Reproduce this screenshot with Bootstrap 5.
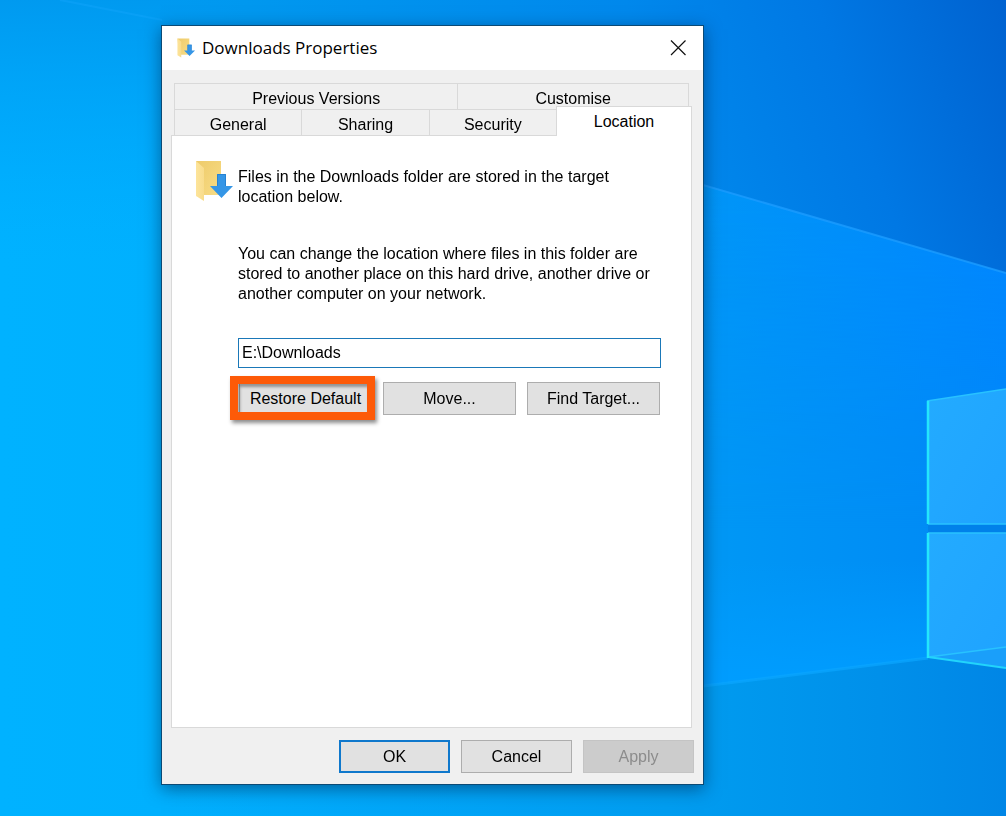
<!DOCTYPE html>
<html lang="en">
<head>
<meta charset="utf-8">
<meta name="viewport" content="width=device-width, initial-scale=1">
<title>Downloads Properties</title>
<link href="https://cdn.jsdelivr.net/npm/bootstrap@5.3.0/dist/css/bootstrap.min.css" rel="stylesheet">
<style>
  body { font-family: "Liberation Sans", Arial, sans-serif; font-size: 16px; line-height: 20px; color: #000; background: #00a4fb; }
  .desktop { padding: 25px 16px 31px 161px; }
  .wallpaper { position: fixed; inset: 0; z-index: -1; }
  .dialog-window { max-width: 543px; background: #f0f0f0; border: 1px solid #0b4a75; box-shadow: 0 4px 16px rgba(0, 25, 60, .5); }
  .title-bar { height: 44px; padding: 0 16px 0 14px; gap: 6px; }
  .title-bar h1 { font-family: "Open Sans", "Noto Sans", sans-serif; font-size: 17px; line-height: 24px; font-weight: 400; }
  .close-btn { width: 18px; height: 18px; }
  .sheet { padding: 13px 11px 0 9px; }
  .tab-rows { margin: 0 3px; }
  .tab-btn { height: 27px; padding: 4px 0 0; border: 1px solid #d9d9d9; border-right-width: 0; border-bottom-width: 0; background: #f0f0f0; color: #000; line-height: 20px; }
  .tab-rows .row-end { border-right-width: 1px; }
  .tab-wide { flex: 284 1 0; }
  .tab-narrow { flex: 231 1 0; }
  .tab-third { flex: 1 1 0; }
  .tab-row-front { margin: -1px -3px 0 0; }
  .tab-row-front .tab-btn { height: 26px; }
  .tab-row-front .tab-btn.current { flex: 0 0 136px; height: 30px; margin: -3px 0 -1px; padding: 0; border-right-width: 1px; background: #fff; position: relative; }
  .panel { border: 1px solid #d9d9d9; background: #fff; padding: 24px 30px 24px 23px; gap: 5px; }
  .panel-copy { padding-top: 7px; }
  .intro { margin-bottom: 37px; }
  .explain { margin-bottom: 34px; }
  .path-box { height: 30px; padding: 0 3px; border: 1px solid #1a78b8; border-radius: 0; font-size: 16px; line-height: 28px; color: #000; }
  .action-row { gap: 11px; margin: 14px 1px 0; }
  .win-btn { --bs-btn-color: #000; --bs-btn-bg: #e1e1e1; --bs-btn-border-color: #adadad; --bs-btn-hover-color: #000; --bs-btn-hover-bg: #e5f1fb; --bs-btn-hover-border-color: #0078d7; --bs-btn-disabled-color: #8c8c8c; --bs-btn-disabled-bg: #ccc; --bs-btn-disabled-border-color: #c4c4c4; --bs-btn-disabled-opacity: 1; --bs-btn-border-radius: 0; --bs-btn-padding-x: 0; --bs-btn-padding-y: 0; --bs-btn-font-size: 16px; --bs-btn-line-height: 20px; height: 33px; }
  .default-btn { --bs-btn-border-color: #0f78cc; --bs-btn-border-width: 2px; }
  .callout-frame { position: absolute; inset: -7px -4px -6px -10px; border: 8px solid #fd5a08; box-shadow: 2px 3px 4px rgba(0, 0, 0, .45), inset 2px 3px 3px rgba(0, 0, 0, .35); pointer-events: none; }
  .command-row { gap: 11px; padding: 12px 9px 11px; }
  .command-row .win-btn { width: 111px; }
</style>
</head>
<body>
<svg class="wallpaper w-100 h-100" viewBox="0 0 1006 816" preserveAspectRatio="xMaxYMid slice" aria-hidden="true">
  <defs>
    <linearGradient id="base" x1="0" y1="0" x2="1" y2="0">
      <stop offset="0" stop-color="#00b2ff"/><stop offset=".16" stop-color="#00b0fe"/><stop offset=".7" stop-color="#0098f5"/><stop offset="1" stop-color="#0088f5"/>
    </linearGradient>
    <linearGradient id="sky" gradientUnits="userSpaceOnUse" x1="160" y1="300" x2="1006" y2="0">
      <stop offset="0" stop-color="#009cf4" stop-opacity="0"/><stop offset=".2" stop-color="#0098ef"/><stop offset=".6" stop-color="#0088ec"/><stop offset=".8" stop-color="#0078e4"/><stop offset="1" stop-color="#0062d0"/>
    </linearGradient>
    <linearGradient id="top" x1="0" y1="0" x2="0" y2="1">
      <stop offset="0" stop-color="#0094ec" stop-opacity=".8"/><stop offset=".5" stop-color="#009cf5" stop-opacity=".4"/><stop offset="1" stop-color="#00a8ff" stop-opacity="0"/>
    </linearGradient>
    <linearGradient id="beam" x1="0" y1="0" x2="1" y2="0">
      <stop offset="0" stop-color="#0096f7"/><stop offset="1" stop-color="#0086ff"/>
    </linearGradient>
    <linearGradient id="beamfade" x1="0" y1="0" x2="0" y2="1">
      <stop offset="0" stop-color="#fff"/><stop offset=".5" stop-color="#fff" stop-opacity=".7"/><stop offset="1" stop-color="#fff" stop-opacity="0"/>
    </linearGradient>
    <mask id="fade"><rect x="690" y="170" width="316" height="360" fill="url(#beamfade)"/></mask>
    <linearGradient id="floor" gradientUnits="userSpaceOnUse" x1="160" y1="0" x2="1006" y2="0">
      <stop offset="0" stop-color="#00aefb" stop-opacity="0"/><stop offset=".6" stop-color="#009df0"/><stop offset=".85" stop-color="#0090ea"/><stop offset="1" stop-color="#0086e6"/>
    </linearGradient>
    <linearGradient id="glow" x1="0" y1="0" x2="0" y2="1">
      <stop offset="0" stop-color="#009dff" stop-opacity="0"/><stop offset="1" stop-color="#009dff"/>
    </linearGradient>
    <linearGradient id="pane" x1="0" y1="0" x2="1" y2="1">
      <stop offset="0" stop-color="#23abff"/><stop offset="1" stop-color="#1fa3ff"/>
    </linearGradient>
  </defs>
  <rect width="1006" height="816" fill="url(#base)"/>
  <rect width="720" height="260" fill="url(#top)"/>
  <path d="M160 0H1006V273L703 185L160 60Z" fill="url(#sky)"/>
  <path d="M690 182L1006 273V530H690Z" fill="url(#beam)" mask="url(#fade)"/>
  <path d="M690 560H928V658L690 688Z" fill="url(#glow)"/>
  <path d="M160 760L703 686L928 658L1006 668V816H160Z" fill="url(#floor)"/>
  <path d="M60 0L162 20" stroke="#18a8ff" stroke-width="2" opacity=".35"/>
  <path d="M703 185L1006 273" stroke="#1c9cff" stroke-width="2" opacity=".8"/>
  <path d="M703 686L928 658" stroke="#0ba6ff" stroke-width="3" opacity=".7"/>
  <path d="M928 524H1006V533H928Z" fill="#0081ea"/>
  <path d="M928 401L1006 389V524H928Z" fill="url(#pane)"/>
  <path d="M928 533H1006V668L928 657Z" fill="url(#pane)"/>
  <path d="M928 657L1006 647V668Z" fill="#1a9ffa"/>
  <path d="M927 401L1006 389M928 524H1006M928 533H1006M928 657L1006 647" fill="none" stroke="#28c2ff" stroke-width="1.5"/>
  <path d="M928 657L1006 668" stroke="#22d4fb" stroke-width="2"/>
  <path d="M928 401V524M928 533V658" stroke="#24e6fc" stroke-width="2.5"/>
</svg>

<main class="desktop min-vh-100 d-flex">
  <section class="dialog-window w-100 d-flex flex-column" aria-labelledby="dialogTitle">
    <header class="title-bar bg-white d-flex align-items-center">
      <svg width="20" height="20" viewBox="0 0 38 42" aria-hidden="true"><use href="#folder"/></svg>
      <h1 id="dialogTitle" class="mb-0 flex-grow-1">Downloads Properties</h1>
      <button type="button" class="close-btn border-0 bg-transparent p-0 d-flex" aria-label="Close">
        <svg width="18" height="18" viewBox="0 0 18 18"><path d="M2 1.500L16.500 16M16.500 1.500L2 16" stroke="#111" stroke-width="1.200"/></svg>
      </button>
    </header>

    <div class="sheet flex-grow-1 d-flex flex-column">
      <div class="tab-rows" role="tablist">
        <div class="d-flex">
          <button type="button" role="tab" class="tab-btn tab-wide">Previous Versions</button>
          <button type="button" role="tab" class="tab-btn tab-narrow row-end">Customise</button>
        </div>
        <div class="tab-row-front d-flex">
          <button type="button" role="tab" class="tab-btn tab-third">General</button>
          <button type="button" role="tab" class="tab-btn tab-third">Sharing</button>
          <button type="button" role="tab" class="tab-btn tab-third">Security</button>
          <button type="button" role="tab" class="tab-btn current" aria-selected="true" aria-controls="locationPanel">Location</button>
        </div>
      </div>

      <div id="locationPanel" role="tabpanel" class="panel flex-grow-1 d-flex align-items-start">
        <svg class="flex-shrink-0" width="38" height="42" viewBox="0 0 38 42" aria-hidden="true">
          <defs>
            <linearGradient id="back" x1="0" y1="0" x2="1" y2="1"><stop offset="0" stop-color="#eecb6a"/><stop offset="1" stop-color="#f8dc86"/></linearGradient>
            <linearGradient id="flap" x1="0" y1="0" x2="1" y2="0"><stop offset="0" stop-color="#fde49a"/><stop offset="1" stop-color="#f8dc8c"/></linearGradient>
          </defs>
          <g id="folder">
            <path d="M1 1H26V35H5Z" fill="url(#back)"/>
            <path d="M1 1L9 8V41L1 36Z" fill="url(#flap)"/>
            <path d="M22 14H31V26H38L26.500 38L15 26H22Z" fill="#3596e6"/>
            <path d="M22.500 26V14.500H30.500V26" fill="none" stroke="#2682d2"/>
          </g>
        </svg>
        <form class="panel-copy flex-grow-1">
          <p class="intro">Files in the Downloads folder are stored in the target location below.</p>
          <label for="targetPath" class="explain d-block">You can change the location where files in this folder are stored to another place on this hard drive, another drive or another computer on your network.</label>
          <input id="targetPath" type="text" class="path-box form-control" value="E:\Downloads">
          <div class="action-row d-flex">
            <button type="button" class="btn win-btn col position-relative">Restore Default<span class="callout-frame"></span></button>
            <button type="button" class="btn win-btn col">Move...</button>
            <button type="button" class="btn win-btn col">Find Target...</button>
          </div>
        </form>
      </div>
    </div>

    <footer class="command-row d-flex justify-content-end">
      <button type="button" class="btn win-btn default-btn">OK</button>
      <button type="button" class="btn win-btn">Cancel</button>
      <button type="button" class="btn win-btn" disabled>Apply</button>
    </footer>
  </section>
</main>
<script src="https://cdn.jsdelivr.net/npm/bootstrap@5.3.0/dist/js/bootstrap.bundle.min.js"></script>
</body>
</html>
